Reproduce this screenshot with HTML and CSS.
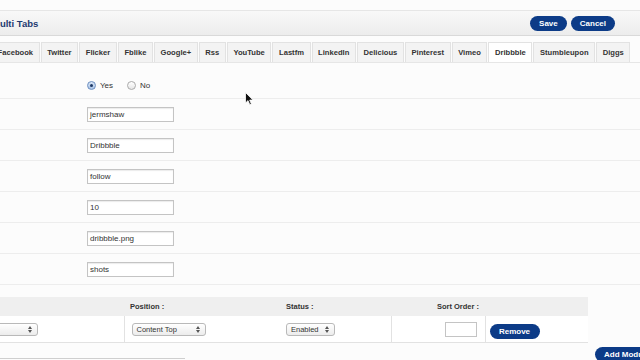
FILE: index.html
```html
<!DOCTYPE html>
<html lang="en">
  <head>
    <meta charset="utf-8" />
    <meta name="viewport" content="width=device-width, initial-scale=1" />
    <title>Multi Tabs</title>
    <link rel="stylesheet" href="styles.css">
  </head>
  <body>
    <div class="page">
      <div class="heading">
        <h1>Multi Tabs</h1>
        <div class="buttons">
          <a class="btn">Save</a>
          <a class="btn">Cancel</a>
        </div>
      </div>
      <ul class="tabs">
        <li>Facebook</li>
        <li>Twitter</li>
        <li>Flicker</li>
        <li>Fblike</li>
        <li>Google+</li>
        <li>Rss</li>
        <li>YouTube</li>
        <li>Lastfm</li>
        <li>LinkedIn</li>
        <li>Delicious</li>
        <li>Pinterest</li>
        <li>Vimeo</li>
        <li class="active">Dribbble</li>
        <li>Stumbleupon</li>
        <li>Diggs</li>
      </ul>
      <div class="form">
        <div class="row first">
          <label class="radio"><span class="dot checked"></span>Yes</label>
          <label class="radio"><span class="dot"></span>No</label>
        </div>
        <div class="row"><div class="field">jermshaw</div></div>
        <div class="row"><div class="field">Dribbble</div></div>
        <div class="row"><div class="field">follow</div></div>
        <div class="row"><div class="field">10</div></div>
        <div class="row"><div class="field">dribbble.png</div></div>
        <div class="row"><div class="field">shots</div></div>
      </div>
      <table class="modules">
        <colgroup>
          <col class="c1"><col class="c2"><col class="c3"><col class="c4"><col class="c5">
        </colgroup>
        <thead>
          <tr>
            <th></th>
            <th class="pos">Position :</th>
            <th class="stat">Status :</th>
            <th class="sort">Sort Order :</th>
            <th></th>
          </tr>
        </thead>
        <tbody>
          <tr>
            <td><div class="select wide1"><span></span><svg width="4" height="7" viewBox="0 0 4 7"><path d="M0 3 L2 0 L4 3 Z M0 4 L2 7 L4 4 Z" fill="#555"/></svg></div></td>
            <td class="line pos"><div class="select wide2"><span>Content Top</span><svg width="4" height="7" viewBox="0 0 4 7"><path d="M0 3 L2 0 L4 3 Z M0 4 L2 7 L4 4 Z" fill="#555"/></svg></div></td>
            <td class="stat"><div class="select wide3"><span>Enabled</span><svg width="4" height="7" viewBox="0 0 4 7"><path d="M0 3 L2 0 L4 3 Z M0 4 L2 7 L4 4 Z" fill="#555"/></svg></div></td>
            <td class="line sort"><div class="order"></div></td>
            <td class="line act"><a class="btn remove">Remove</a></td>
          </tr>
        </tbody>
      </table>
      <div class="footer">
        <div class="box"></div>
        <a class="btn add">Add Module</a>
      </div>
      <svg class="cursor" width="9" height="14" viewBox="0 0 9 14">
        <path d="M0.5 0.5 L0.5 11 L3 8.6 L4.8 12.8 L6.4 12.1 L4.7 8.1 L8 8.1 Z" fill="#111" stroke="#fff" stroke-width="0.8"/>
      </svg>
    </div>
  </body>
</html>
```

FILE: styles.css
```css
body {
  margin: 0;
  background: #fcfcfc;
  font-family: "Liberation Sans", Arial, sans-serif;
  overflow: hidden;
}
.page {
  position: relative;
  margin-left: -16px;
  width: 656px;
  height: 360px;
  padding-top: 10px;
  box-sizing: border-box;
}
.heading {
  display: flex;
  align-items: center;
  justify-content: space-between;
  height: 24px;
  padding: 0 25px 0 8px;
  background: linear-gradient(#f8f8f8, #ececec);
  border-top: 1px solid #e6e6e6;
  border-bottom: 1px solid #d9d9d9;
}
.heading h1 {
  margin: 0;
  font-size: 9.5px;
  font-weight: bold;
  color: #1d3a70;
}
.buttons {
  display: flex;
  gap: 4px;
}
.btn {
  display: inline-block;
  height: 15px;
  line-height: 15px;
  padding: 0 9px;
  border-radius: 8px;
  background: #0c3b87;
  color: #fff;
  font-size: 8px;
  font-weight: bold;
  box-sizing: border-box;
  text-align: center;
  white-space: nowrap;
}
.tabs {
  display: flex;
  margin: 6px 0 0;
  padding: 0 0 0 7px;
  list-style: none;
  border-bottom: 1px solid #e6e6e6;
}
.tabs li {
  height: 19px;
  line-height: 19px;
  padding: 0 5.6px;
  margin-right: 1px;
  border: 1px solid #e2e2e2;
  border-bottom: none;
  background: #f3f3f3;
  font-size: 7.6px;
  font-weight: bold;
  color: #333;
}
.tabs li.active {
  background: #fff;
}
.row {
  display: flex;
  align-items: center;
  height: 30px;
  padding-left: 103px;
  border-bottom: 1px solid #ededed;
}
.row.first {
  height: 12px;
  padding-top: 16px;
  padding-bottom: 7px;
}
.radio {
  display: flex;
  align-items: center;
  margin-right: 14px;
  font-size: 8px;
  color: #333;
}
.dot {
  width: 7px;
  height: 7px;
  margin-right: 4px;
  border: 1px solid #aaa;
  border-radius: 50%;
  background: linear-gradient(#fff, #e6e6e6);
  position: relative;
}
.dot.checked {
  border-color: #6d8fc0;
  background: linear-gradient(#d9e6f7, #a9c3e6);
}
.dot.checked::after {
  content: "";
  position: absolute;
  left: 2px;
  top: 2px;
  width: 3px;
  height: 3px;
  border-radius: 50%;
  background: #1f3a66;
}
.field {
  width: 81px;
  height: 13px;
  line-height: 13px;
  padding: 0 2px;
  border: 1px solid #c4c4c4;
  background: #fff;
  box-shadow: inset 0 1px 1px rgba(0, 0, 0, 0.08);
  font-size: 8px;
  color: #333;
}
.modules {
  margin-top: 12px;
  width: 604px;
  table-layout: fixed;
  border-collapse: collapse;
}
.c1 { width: 140px; }
.c2 { width: 158px; }
.c3 { width: 109px; }
.c4 { width: 94px; }
.c5 { width: 103px; }
.modules th {
  height: 19px;
  padding: 0;
  background: #efefef;
  font-size: 7.5px;
  font-weight: bold;
  color: #333;
  text-align: left;
}
.modules th.pos { padding-left: 6px; }
.modules th.stat { padding-left: 4px; }
.modules th.sort {
  text-align: right;
  padding-right: 6px;
}
.modules td {
  height: 26px;
  padding: 0;
  background: #fff;
  border-bottom: 1px solid #e2e2e2;
}
.modules td.line { border-left: 1px solid #e2e2e2; }
.modules td.pos { padding-left: 7px; }
.modules td.stat { padding-left: 4px; }
.modules td.sort { text-align: right; padding-right: 8px; }
.modules td.act { padding-left: 4px; }
.select {
  display: flex;
  align-items: center;
  justify-content: space-between;
  height: 11px;
  padding: 0 5px 0 4px;
  border: 1px solid #b9b9b9;
  border-radius: 3px;
  background: linear-gradient(#ffffff, #ececec);
  font-size: 7.5px;
  color: #333;
  box-sizing: content-box;
}
.select.wide1 { width: 43px; }
.select.wide2 { width: 63px; }
.select.wide3 { width: 38px; }
.order {
  display: inline-block;
  width: 30px;
  height: 13px;
  border: 1px solid #c4c4c4;
  background: #fff;
  vertical-align: middle;
}
.remove { width: 50px; }
.footer {
  display: flex;
  align-items: flex-start;
}
.box {
  flex-shrink: 0;
  width: 201px;
  height: 20px;
  margin-top: 15px;
  border-top: 1px solid #cfcfcf;
}
.add {
  flex-shrink: 0;
  margin: 4px 0 0 410px;
}
.cursor {
  position: absolute;
  left: 261px;
  top: 92px;
}
```
